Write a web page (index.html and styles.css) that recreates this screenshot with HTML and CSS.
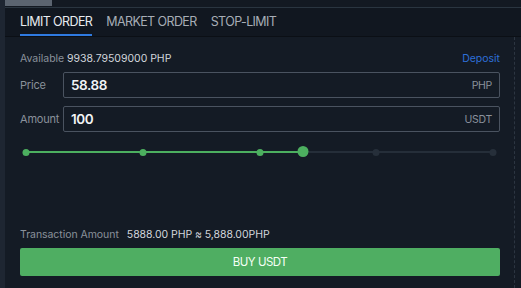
FILE: index.html
```html
<!DOCTYPE html>
<html>
<head>
<meta charset="utf-8">
<link rel="stylesheet" href="styles.css">
</head>
<body>
<div class="app">
  <div class="leftbar"></div>
  <div class="main">
    <div class="topstrip"><div class="stub"></div></div>
    <div class="tabs">
      <div class="tab active">LIMIT ORDER</div>
      <div class="tab">MARKET ORDER</div>
      <div class="tab">STOP-LIMIT</div>
    </div>
    <div class="body">
      <div class="panel">
        <div class="avail-row">
          <div class="avail"><span class="muted">Available</span> 9938.79509000 PHP</div>
          <a class="deposit">Deposit</a>
        </div>
        <div class="field">
          <div class="label">Price</div>
          <div class="input"><span class="val">58.88</span><span class="unit">PHP</span></div>
        </div>
        <div class="field">
          <div class="label">Amount</div>
          <div class="input"><span class="val">100</span><span class="unit">USDT</span></div>
        </div>
        <div class="slider">
          <div class="track"></div>
          <div class="fill"></div>
          <span class="dot on" style="left:0%"></span>
          <span class="dot on" style="left:25%"></span>
          <span class="dot on" style="left:50%"></span>
          <span class="dot off" style="left:75%"></span>
          <span class="dot off" style="left:100%"></span>
          <span class="thumb" style="left:59.4%"></span>
        </div>
        <div class="spacer"></div>
        <div class="tx"><span class="muted">Transaction Amount</span><span class="txval">5888.00 PHP ≈ 5,888.00PHP</span></div>
        <button class="buy">BUY USDT</button>
      </div>
    </div>
  </div>
</div>
</body>
</html>
```
FILE: styles.css
```css
html, body { margin: 0; padding: 0; }
body {
  background: #141b25;
  font-family: "Inter", "Roboto", sans-serif;
  width: 521px;
  height: 288px;
  overflow: hidden;
}
.app { display: flex; height: 288px; }
.leftbar { width: 5px; background: #1e2632; flex: none; }
.main { flex: 1; display: flex; flex-direction: column; }
.topstrip {
  height: 7px;
  background: #131922;
  border-bottom: 1px solid #2a3540;
  display: flex;
}
.stub { width: 47px; height: 6px; background: #5b6470; }
.tabs {
  height: 28px;
  background: #111720;
  border-bottom: 1px solid #0b0f15;
  display: flex;
  gap: 14px;
  padding-left: 15px;
}
.tab {
  font-size: 12.5px;
  letter-spacing: -0.6px;
  color: #a7adb6;
  line-height: 27px;
  border-bottom: 2px solid transparent;
  height: 26px;
}
.tab.active { color: #e8ebef; border-bottom-color: #2f7ae0; }
.body { flex: 1; display: flex; }
.panel {
  width: 480px;
  padding: 0 14px 0 15px;
  border-right: 1px dashed #2c3541;
  display: flex;
  flex-direction: column;
  background: #141b25;
}
.avail-row {
  display: flex;
  justify-content: space-between;
  align-items: center;
  height: 16px;
  margin-top: 13px;
  font-size: 10.5px;
  letter-spacing: -0.02px;
}
.avail { color: #d2d6dc; }
.muted { color: #8a919b; }
.deposit { color: #2e6fd8; }
.field {
  display: flex;
  align-items: center;
  margin-top: 6px;
}
.field + .field { margin-top: 8px; }
.label {
  width: 43px;
  font-size: 11px;
  letter-spacing: -0.2px;
  color: #8a919b;
}
.input {
  flex: 1;
  height: 24px;
  border: 1px solid #4a5360;
  border-radius: 2px;
  display: flex;
  align-items: center;
  justify-content: space-between;
  padding: 0 7px;
}
.val { color: #f2f4f6; font-size: 13.5px; font-weight: 600; letter-spacing: -0.4px; }
.unit { color: #8a919b; font-size: 10.5px; letter-spacing: -0.3px; }
.slider {
  position: relative;
  height: 10px;
  margin: 15px 7px 0 6px;
}
.track {
  position: absolute; left: 0; right: 0; top: 4px; height: 2px; background: #252e39;
}
.fill {
  position: absolute; left: 0; width: 59.4%; top: 4px; height: 2px; background: #4caf5f;
}
.dot {
  position: absolute; top: 2px; width: 7px; height: 7px; border-radius: 50%;
  transform: translateX(-50%);
}
.dot.on { background: #4caf5f; }
.dot.off { background: #262f3a; }
.thumb {
  position: absolute; top: -1px; width: 11px; height: 11px; border-radius: 50%;
  background: #4caf5f; transform: translateX(-50%);
}
.spacer { height: 70px; }
.tx {
  font-size: 10.5px;
  letter-spacing: -0.05px;
  display: flex;
  gap: 8px;
  height: 14px;
  align-items: center;
}
.txval { color: #d2d6dc; }
.buy {
  margin-top: 7px;
  height: 28px;
  background: #4fae62;
  border: none;
  border-radius: 2px;
  color: #f4fff5;
  font-family: inherit;
  font-size: 11.5px;
  letter-spacing: -0.5px;
  padding: 0;
}
```
